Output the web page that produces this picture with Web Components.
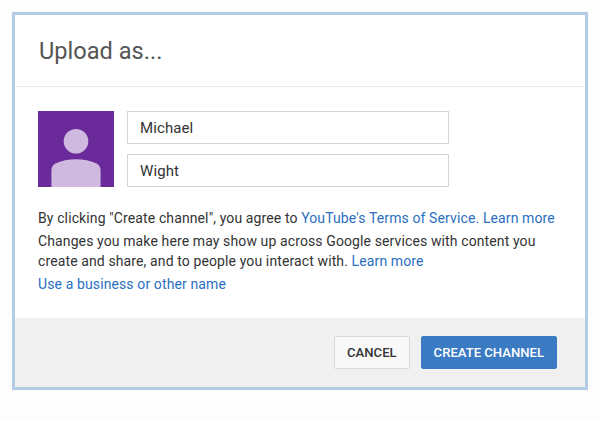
<!DOCTYPE html>
<html>
<head>
<meta charset="utf-8">
<title>Upload as</title>
<style>
	html, body { margin: 0; height: 100%; background: #fdfdfd; }
	body { font-family: Roboto, "Liberation Sans", sans-serif; padding: 12px 12px 0 12px; box-sizing: border-box; }
</style>
</head>
<body>
<upload-dialog>
	<span slot="title">Upload as...</span>
	<channel-avatar slot="avatar"></channel-avatar>
	<name-input slot="names" value="Michael"></name-input>
	<name-input slot="names" value="Wight"></name-input>
	<div slot="notes" style="margin-bottom:3px">By clicking "Create channel", you agree to <a href="#" style="color:#2a6fc0;text-decoration:none">YouTube's Terms of Service.</a> <a href="#" style="color:#2a6fc0;text-decoration:none">Learn more</a></div>
	<div slot="notes" style="margin-bottom:3px">Changes you make here may show up across Google services with content you<br>create and share, and to people you interact with. <a href="#" style="color:#2a6fc0;text-decoration:none">Learn more</a></div>
	<div slot="notes"><a href="#" style="color:#2a6fc0;text-decoration:none">Use a business or other name</a></div>
	<flat-button slot="actions">CANCEL</flat-button>
	<flat-button slot="actions" primary>CREATE CHANNEL</flat-button>
</upload-dialog>
<script>
class UploadDialog extends HTMLElement {
	constructor() {
		super()
		this.attachShadow({ mode: 'open' })
		this.shadowRoot.innerHTML = `
		<style>
		:host {
			display: block;
			width: 576px;
			height: 378px;
			box-sizing: border-box;
			border: 3px solid #b4cce6;
			background: #fff;
		}
		#wrap { display: flex; flex-direction: column; height: 100%; }
		#head {
			height: 72px;
			box-sizing: border-box;
			border-bottom: 1px solid #e8e8e8;
			padding: 20px 0 0 24px;
			font-size: 23.6px;
			line-height: 32px;
			color: #555;
		}
		#main { flex: 1; padding: 24px 28px 0 23px; box-sizing: border-box; }
		#who { display: flex; gap: 13px; }
		#names { display: flex; flex-direction: column; gap: 10px; }
		#notes { margin-top: 21px; font-size: 14px; line-height: 20px; letter-spacing: 0.115px; color: #333; }
		#foot {
			height: 69px;
			box-sizing: border-box;
			background: #f0f0f0;
			display: flex;
			justify-content: flex-end;
			gap: 11px;
			padding: 18px 28px 0 0;
		}
		</style>
		<div id='wrap'>
			<div id='head'><slot name='title'></slot></div>
			<div id='main'>
				<div id='who'>
					<slot name='avatar'></slot>
					<div id='names'><slot name='names'></slot></div>
				</div>
				<div id='notes'><slot name='notes'></slot></div>
			</div>
			<div id='foot'><slot name='actions'></slot></div>
		</div>
		`
	}
}
class ChannelAvatar extends HTMLElement {
	constructor() {
		super()
		this.attachShadow({ mode: 'open' })
		this.shadowRoot.innerHTML = `
		<style>
		:host { display: block; width: 76px; height: 76px; }
		svg { display: block; }
		</style>
		<svg width='76' height='76' viewBox='0 0 76 76'>
			<rect width='76' height='76' fill='#6a2a9a'/>
			<circle cx='38' cy='30.3' r='12.3' fill='#cfb9e0'/>
			<path d='M13.400 76V59c0-3 1.500-5 4-6.500 6-2.700 13-4.200 20.600-4.200s14.600 1.500 20.600 4.200c2.500 1.500 4 3.500 4 6.500v17z' fill='#cfb9e0'/>
		</svg>
		`
	}
}
class NameInput extends HTMLElement {
	constructor() {
		super()
		this.attachShadow({ mode: 'open' })
		this.shadowRoot.innerHTML = `
		<style>
		:host { display: block; width: 322px; height: 33px; }
		input {
			width: 100%;
			height: 100%;
			box-sizing: border-box;
			border: 1px solid #d4d4d4;
			background: #fff;
			padding: 0 12px;
			margin: 0;
			outline: none;
			font: 400 15px Roboto, "Liberation Sans", sans-serif;
			letter-spacing: 0.1px;
			color: #333;
		}
		</style>
		<input type='text'>
		`
		this.shadowRoot.querySelector('input').value = this.getAttribute('value') || ''
	}
}
class FlatButton extends HTMLElement {
	constructor() {
		super()
		this.attachShadow({ mode: 'open' })
		this.shadowRoot.innerHTML = `
		<style>
		:host { display: block; }
		button {
			height: 33px;
			box-sizing: border-box;
			border: 1px solid #d8d8d8;
			border-radius: 2px;
			background: #f8f8f8;
			color: #333;
			padding: 0 12px;
			margin: 0;
			font: 500 13.1px Roboto, "Liberation Sans", sans-serif;
			white-space: nowrap;
		}
		:host([primary]) button {
			background: #3a7bc4;
			border-color: #3a7bc4;
			color: #fff;
		}
		</style>
		<button><slot></slot></button>
		`
	}
}
window.customElements.define('upload-dialog', UploadDialog)
window.customElements.define('channel-avatar', ChannelAvatar)
window.customElements.define('name-input', NameInput)
window.customElements.define('flat-button', FlatButton)
</script>
</body>
</html>
